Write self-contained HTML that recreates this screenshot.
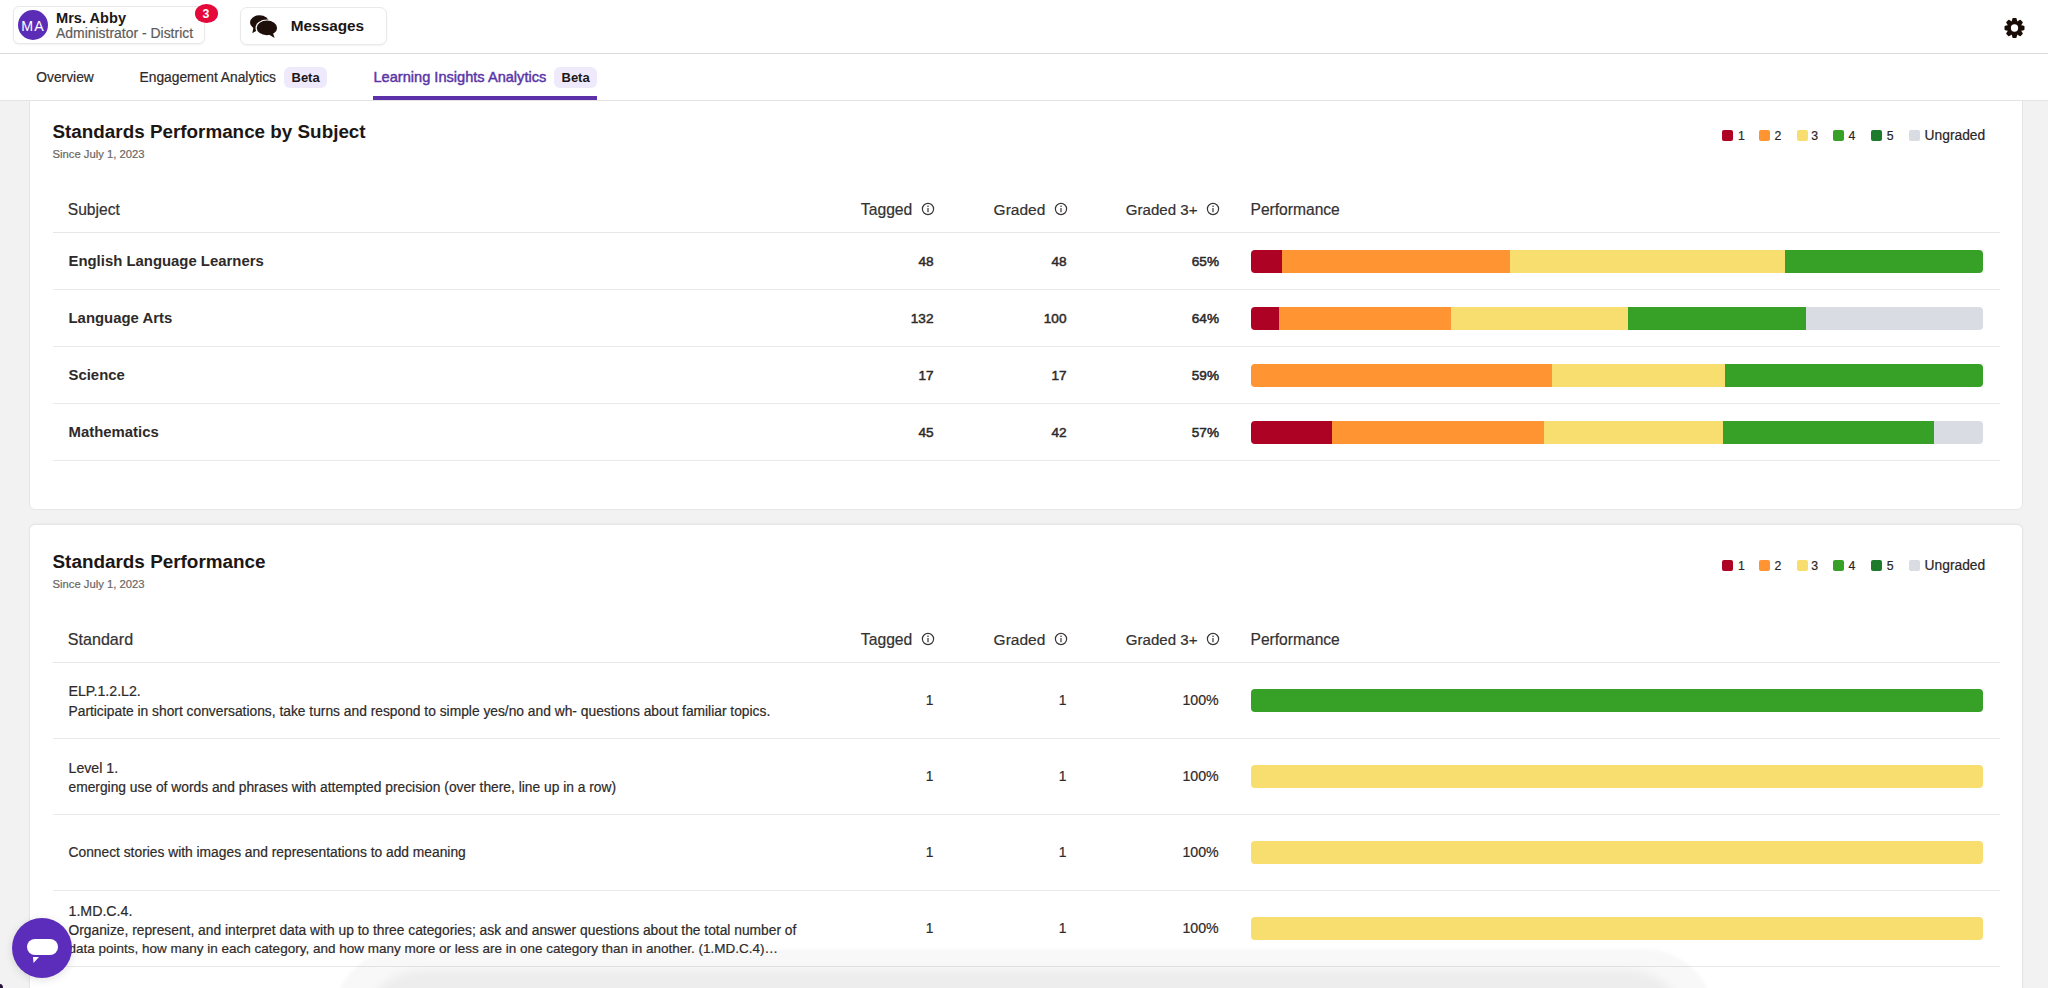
<!DOCTYPE html>
<html><head><meta charset="utf-8">
<style>
html,body{margin:0;padding:0;}
body{width:2048px;height:988px;overflow:hidden;position:relative;background:#F2F2F2;font-family:"Liberation Sans",sans-serif;}
.t{position:absolute;white-space:nowrap;-webkit-text-stroke:0.2px currentColor;}
.t[style*="font-weight:700"]{-webkit-text-stroke:0;}
.b{position:absolute;}
svg{position:absolute;}
</style></head><body>
<div class="b" style="left:29px;top:60px;width:1994px;height:450px;background:#FFFFFF;border:1px solid #E6E6E6;border-radius:6px;box-sizing:border-box;"></div>
<div class="b" style="left:29px;top:524px;width:1994px;height:600px;background:#FFFFFF;border:1px solid #E6E6E6;border-radius:6px;box-sizing:border-box;box-shadow:0 -1px 2px rgba(0,0,0,0.03);"></div>
<div class="b" style="left:0px;top:0px;width:2048px;height:53px;background:#FFFFFF;border-bottom:1px solid #DADADA;box-shadow:0 1px 1px rgba(0,0,0,0.04);"></div>
<div class="b" style="left:0px;top:54px;width:2048px;height:46px;background:#FFFFFF;border-bottom:1px solid #E4E4E4;"></div>
<div class="b" style="left:13px;top:6px;width:192px;height:38px;background:#FFFFFF;border:1px solid #E9E9E9;border-radius:6px;box-sizing:border-box;box-shadow:0 1px 2px rgba(0,0,0,0.05);"></div>
<div class="b" style="left:17.5px;top:10.2px;width:30.2px;height:30.2px;background:#5B2DB6;border-radius:50%;"></div>
<div class="t" style="left:21.3px;top:19.28px;font-size:14.2px;line-height:14.2px;color:#FFFFFF;letter-spacing:1.1px;-webkit-text-stroke:0;">MA</div>
<div class="t" style="left:56px;top:10.64px;font-size:14.6px;line-height:14.6px;font-weight:700;color:#1c1614;">Mrs. Abby</div>
<div class="t" style="left:56px;top:27.19px;font-size:13.95px;line-height:13.95px;color:#5f5b5a;">Administrator - District</div>
<div class="b" style="left:195px;top:4px;width:22.5px;height:18.5px;background:#E5083B;border-radius:50%;"></div>
<div class="t" style="left:202.6px;top:7.59px;font-size:12.3px;line-height:12.3px;font-weight:700;color:#FFFFFF;">3</div>
<div class="b" style="left:240px;top:7px;width:147px;height:38px;background:#FFFFFF;border:1px solid #E9E9E9;border-radius:7px;box-sizing:border-box;box-shadow:0 1px 2px rgba(0,0,0,0.05);"></div>
<svg style="left:246px;top:10px" width="36" height="32" viewBox="0 0 36 32">
<ellipse cx="13.6" cy="12.4" rx="9.6" ry="7.1" fill="#1f0f0a"/>
<path d="M7.5 17 L6.3 23.3 L13 19.2 Z" fill="#1f0f0a"/>
<ellipse cx="20.9" cy="17.9" rx="11.4" ry="8.5" fill="#FFFFFF"/>
<ellipse cx="20.9" cy="17.9" rx="10.2" ry="7.3" fill="#1f0f0a"/>
<path d="M22.5 24.2 L28.6 27.9 L26.8 22.5 Z" fill="#1f0f0a"/>
</svg>
<div class="t" style="left:290.8px;top:18.31px;font-size:15.35px;line-height:15.35px;font-weight:700;color:#1c1614;">Messages</div>
<svg style="left:2003px;top:16.7px" width="23" height="22" viewBox="0 0 23 22">
<path d="M9.48 5.14 L10.22 1.89 L12.78 1.89 L13.52 5.14 L14.22 5.43 L17.04 3.65 L18.85 5.46 L17.07 8.28 L17.36 8.98 L20.61 9.72 L20.61 12.28 L17.36 13.02 L17.07 13.72 L18.85 16.54 L17.04 18.35 L14.22 16.57 L13.52 16.86 L12.78 20.11 L10.22 20.11 L9.48 16.86 L8.78 16.57 L5.96 18.35 L4.15 16.54 L5.93 13.72 L5.64 13.02 L2.39 12.28 L2.39 9.72 L5.64 8.98 L5.93 8.28 L4.15 5.46 L5.96 3.65 L8.78 5.43 Z" fill="#1a0d08" stroke="#1a0d08" stroke-width="1.8" stroke-linejoin="round"/>
<circle cx="11.5" cy="11" r="3.65" fill="#FFFFFF"/>
</svg>
<div class="t" style="left:36.3px;top:70.82px;font-size:13.8px;line-height:13.8px;color:#2f2a29;-webkit-text-stroke:0.2px #2f2a29;">Overview</div>
<div class="t" style="left:139.5px;top:70.82px;font-size:13.8px;line-height:13.8px;color:#2f2a29;-webkit-text-stroke:0.2px #2f2a29;">Engagement Analytics</div>
<div class="b" style="left:284px;top:67px;width:43px;height:21px;background:#EFEAFB;border-radius:6px;"></div>
<div class="t" style="left:291.5px;top:71.30px;font-size:13.0px;line-height:13.0px;font-weight:700;color:#1c1614;">Beta</div>
<div class="t" style="left:373.5px;top:70.14px;font-size:14.6px;line-height:14.6px;color:#5A35A6;-webkit-text-stroke:0.45px #5A35A6;">Learning Insights Analytics</div>
<div class="b" style="left:554px;top:67px;width:43px;height:21px;background:#EFEAFB;border-radius:6px;"></div>
<div class="t" style="left:561.5px;top:71.30px;font-size:13.0px;line-height:13.0px;font-weight:700;color:#1c1614;">Beta</div>
<div class="b" style="left:373px;top:96px;width:224px;height:4px;background:#5B30A8;"></div>
<div class="t" style="left:52.5px;top:123.34px;font-size:18.85px;line-height:18.85px;font-weight:700;color:#1c1614;">Standards Performance by Subject</div>
<div class="t" style="left:52.5px;top:148.78px;font-size:11.25px;line-height:11.25px;color:#6a6665;">Since July 1, 2023</div>
<div class="b" style="left:1722px;top:130px;width:11px;height:11px;background:#AD0223;border-radius:2px;"></div>
<div class="t" style="left:1738px;top:130.09px;font-size:12.3px;line-height:12.3px;color:#2b2523;">1</div>
<div class="b" style="left:1758.5px;top:130px;width:11px;height:11px;background:#FF9433;border-radius:2px;"></div>
<div class="t" style="left:1774.4px;top:130.09px;font-size:12.3px;line-height:12.3px;color:#2b2523;">2</div>
<div class="b" style="left:1796.5px;top:130px;width:11px;height:11px;background:#F8DE6E;border-radius:2px;"></div>
<div class="t" style="left:1811.3px;top:130.09px;font-size:12.3px;line-height:12.3px;color:#2b2523;">3</div>
<div class="b" style="left:1833px;top:130px;width:11px;height:11px;background:#37A026;border-radius:2px;"></div>
<div class="t" style="left:1848.6px;top:130.09px;font-size:12.3px;line-height:12.3px;color:#2b2523;">4</div>
<div class="b" style="left:1871px;top:130px;width:11px;height:11px;background:#1E7B2B;border-radius:2px;"></div>
<div class="t" style="left:1886.8px;top:130.09px;font-size:12.3px;line-height:12.3px;color:#2b2523;">5</div>
<div class="b" style="left:1909px;top:130px;width:11px;height:11px;background:#D9DCE2;border-radius:2px;"></div>
<div class="t" style="left:1924.6px;top:128.82px;font-size:13.8px;line-height:13.8px;color:#2b2523;">Ungraded</div>
<div class="t" style="left:67.8px;top:201.59px;font-size:15.6px;line-height:15.6px;color:#333131;">Subject</div>
<div class="t" style="right:1135.7px;top:201.51px;font-size:15.7px;line-height:15.7px;color:#333131;">Tagged</div>
<svg style="left:920.8px;top:202.2px" width="14" height="14" viewBox="0 0 14 14">
<circle cx="7" cy="7" r="5.6" fill="none" stroke="#3a3636" stroke-width="1.2"/>
<rect x="6.4" y="6" width="1.2" height="4.2" fill="#3a3636"/>
<circle cx="7" cy="4.3" r="0.8" fill="#3a3636"/>
</svg>
<div class="t" style="right:1002.7px;top:201.68px;font-size:15.5px;line-height:15.5px;color:#333131;">Graded</div>
<svg style="left:1053.8px;top:202.2px" width="14" height="14" viewBox="0 0 14 14">
<circle cx="7" cy="7" r="5.6" fill="none" stroke="#3a3636" stroke-width="1.2"/>
<rect x="6.4" y="6" width="1.2" height="4.2" fill="#3a3636"/>
<circle cx="7" cy="4.3" r="0.8" fill="#3a3636"/>
</svg>
<div class="t" style="right:850.5px;top:202.02px;font-size:15.1px;line-height:15.1px;color:#333131;">Graded 3+</div>
<svg style="left:1206px;top:202.2px" width="14" height="14" viewBox="0 0 14 14">
<circle cx="7" cy="7" r="5.6" fill="none" stroke="#3a3636" stroke-width="1.2"/>
<rect x="6.4" y="6" width="1.2" height="4.2" fill="#3a3636"/>
<circle cx="7" cy="4.3" r="0.8" fill="#3a3636"/>
</svg>
<div class="t" style="left:1250.5px;top:201.59px;font-size:15.6px;line-height:15.6px;color:#333131;">Performance</div>
<div class="b" style="left:53px;top:232px;width:1947px;height:1px;background:#E6E6E6;"></div>
<div class="t" style="left:68.5px;top:254.39px;font-size:14.9px;line-height:14.9px;font-weight:700;color:#2e2a29;">English Language Learners</div>
<div class="t" style="right:1114.5px;top:254.79px;font-size:13.6px;line-height:13.6px;color:#2e2a29;-webkit-text-stroke:0.5px #2e2a29;">48</div>
<div class="t" style="right:981.5px;top:254.79px;font-size:13.6px;line-height:13.6px;color:#2e2a29;-webkit-text-stroke:0.5px #2e2a29;">48</div>
<div class="t" style="right:829px;top:254.79px;font-size:13.6px;line-height:13.6px;color:#2e2a29;-webkit-text-stroke:0.5px #2e2a29;">65%</div>
<div class="b" style="left:1251px;top:250px;width:732px;height:22.5px;border-radius:4px;overflow:hidden;display:flex;"><div style="flex:0 0 4.1667%;background:#AD0223;"></div><div style="flex:0 0 31.2500%;background:#FF9433;"></div><div style="flex:0 0 37.5000%;background:#F8DE6E;"></div><div style="flex:0 0 27.0833%;background:#37A026;"></div></div>
<div class="b" style="left:53px;top:289px;width:1947px;height:1px;background:#E9E9E9;"></div>
<div class="t" style="left:68.5px;top:311.39px;font-size:14.9px;line-height:14.9px;font-weight:700;color:#2e2a29;">Language Arts</div>
<div class="t" style="right:1114.5px;top:311.79px;font-size:13.6px;line-height:13.6px;color:#2e2a29;-webkit-text-stroke:0.5px #2e2a29;">132</div>
<div class="t" style="right:981.5px;top:311.79px;font-size:13.6px;line-height:13.6px;color:#2e2a29;-webkit-text-stroke:0.5px #2e2a29;">100</div>
<div class="t" style="right:829px;top:311.79px;font-size:13.6px;line-height:13.6px;color:#2e2a29;-webkit-text-stroke:0.5px #2e2a29;">64%</div>
<div class="b" style="left:1251px;top:307px;width:732px;height:22.5px;border-radius:4px;overflow:hidden;display:flex;"><div style="flex:0 0 3.7879%;background:#AD0223;"></div><div style="flex:0 0 23.4848%;background:#FF9433;"></div><div style="flex:0 0 24.2424%;background:#F8DE6E;"></div><div style="flex:0 0 24.2424%;background:#37A026;"></div><div style="flex:0 0 24.2424%;background:#D9DCE2;"></div></div>
<div class="b" style="left:53px;top:346px;width:1947px;height:1px;background:#E9E9E9;"></div>
<div class="t" style="left:68.5px;top:368.39px;font-size:14.9px;line-height:14.9px;font-weight:700;color:#2e2a29;">Science</div>
<div class="t" style="right:1114.5px;top:368.79px;font-size:13.6px;line-height:13.6px;color:#2e2a29;-webkit-text-stroke:0.5px #2e2a29;">17</div>
<div class="t" style="right:981.5px;top:368.79px;font-size:13.6px;line-height:13.6px;color:#2e2a29;-webkit-text-stroke:0.5px #2e2a29;">17</div>
<div class="t" style="right:829px;top:368.79px;font-size:13.6px;line-height:13.6px;color:#2e2a29;-webkit-text-stroke:0.5px #2e2a29;">59%</div>
<div class="b" style="left:1251px;top:364px;width:732px;height:22.5px;border-radius:4px;overflow:hidden;display:flex;"><div style="flex:0 0 41.1765%;background:#FF9433;"></div><div style="flex:0 0 23.5294%;background:#F8DE6E;"></div><div style="flex:0 0 35.2941%;background:#37A026;"></div></div>
<div class="b" style="left:53px;top:403px;width:1947px;height:1px;background:#E9E9E9;"></div>
<div class="t" style="left:68.5px;top:425.39px;font-size:14.9px;line-height:14.9px;font-weight:700;color:#2e2a29;">Mathematics</div>
<div class="t" style="right:1114.5px;top:425.79px;font-size:13.6px;line-height:13.6px;color:#2e2a29;-webkit-text-stroke:0.5px #2e2a29;">45</div>
<div class="t" style="right:981.5px;top:425.79px;font-size:13.6px;line-height:13.6px;color:#2e2a29;-webkit-text-stroke:0.5px #2e2a29;">42</div>
<div class="t" style="right:829px;top:425.79px;font-size:13.6px;line-height:13.6px;color:#2e2a29;-webkit-text-stroke:0.5px #2e2a29;">57%</div>
<div class="b" style="left:1251px;top:421px;width:732px;height:22.5px;border-radius:4px;overflow:hidden;display:flex;"><div style="flex:0 0 11.1111%;background:#AD0223;"></div><div style="flex:0 0 28.8889%;background:#FF9433;"></div><div style="flex:0 0 24.4444%;background:#F8DE6E;"></div><div style="flex:0 0 28.8889%;background:#37A026;"></div><div style="flex:0 0 6.6667%;background:#D9DCE2;"></div></div>
<div class="b" style="left:53px;top:460px;width:1947px;height:1px;background:#E9E9E9;"></div>
<div class="t" style="left:52.5px;top:553.30px;font-size:18.9px;line-height:18.9px;font-weight:700;color:#1c1614;">Standards Performance</div>
<div class="t" style="left:52.5px;top:578.78px;font-size:11.25px;line-height:11.25px;color:#6a6665;">Since July 1, 2023</div>
<div class="b" style="left:1722px;top:560px;width:11px;height:11px;background:#AD0223;border-radius:2px;"></div>
<div class="t" style="left:1738px;top:560.09px;font-size:12.3px;line-height:12.3px;color:#2b2523;">1</div>
<div class="b" style="left:1758.5px;top:560px;width:11px;height:11px;background:#FF9433;border-radius:2px;"></div>
<div class="t" style="left:1774.4px;top:560.09px;font-size:12.3px;line-height:12.3px;color:#2b2523;">2</div>
<div class="b" style="left:1796.5px;top:560px;width:11px;height:11px;background:#F8DE6E;border-radius:2px;"></div>
<div class="t" style="left:1811.3px;top:560.09px;font-size:12.3px;line-height:12.3px;color:#2b2523;">3</div>
<div class="b" style="left:1833px;top:560px;width:11px;height:11px;background:#37A026;border-radius:2px;"></div>
<div class="t" style="left:1848.6px;top:560.09px;font-size:12.3px;line-height:12.3px;color:#2b2523;">4</div>
<div class="b" style="left:1871px;top:560px;width:11px;height:11px;background:#1E7B2B;border-radius:2px;"></div>
<div class="t" style="left:1886.8px;top:560.09px;font-size:12.3px;line-height:12.3px;color:#2b2523;">5</div>
<div class="b" style="left:1909px;top:560px;width:11px;height:11px;background:#D9DCE2;border-radius:2px;"></div>
<div class="t" style="left:1924.6px;top:558.82px;font-size:13.8px;line-height:13.8px;color:#2b2523;">Ungraded</div>
<div class="t" style="left:67.8px;top:631.17px;font-size:16.1px;line-height:16.1px;color:#333131;">Standard</div>
<div class="t" style="right:1135.7px;top:631.51px;font-size:15.7px;line-height:15.7px;color:#333131;">Tagged</div>
<svg style="left:920.8px;top:632.2px" width="14" height="14" viewBox="0 0 14 14">
<circle cx="7" cy="7" r="5.6" fill="none" stroke="#3a3636" stroke-width="1.2"/>
<rect x="6.4" y="6" width="1.2" height="4.2" fill="#3a3636"/>
<circle cx="7" cy="4.3" r="0.8" fill="#3a3636"/>
</svg>
<div class="t" style="right:1002.7px;top:631.68px;font-size:15.5px;line-height:15.5px;color:#333131;">Graded</div>
<svg style="left:1053.8px;top:632.2px" width="14" height="14" viewBox="0 0 14 14">
<circle cx="7" cy="7" r="5.6" fill="none" stroke="#3a3636" stroke-width="1.2"/>
<rect x="6.4" y="6" width="1.2" height="4.2" fill="#3a3636"/>
<circle cx="7" cy="4.3" r="0.8" fill="#3a3636"/>
</svg>
<div class="t" style="right:850.5px;top:632.02px;font-size:15.1px;line-height:15.1px;color:#333131;">Graded 3+</div>
<svg style="left:1206px;top:632.2px" width="14" height="14" viewBox="0 0 14 14">
<circle cx="7" cy="7" r="5.6" fill="none" stroke="#3a3636" stroke-width="1.2"/>
<rect x="6.4" y="6" width="1.2" height="4.2" fill="#3a3636"/>
<circle cx="7" cy="4.3" r="0.8" fill="#3a3636"/>
</svg>
<div class="t" style="left:1250.5px;top:631.59px;font-size:15.6px;line-height:15.6px;color:#333131;">Performance</div>
<div class="b" style="left:53px;top:662px;width:1947px;height:1px;background:#E6E6E6;"></div>
<div class="t" style="left:68.5px;top:684.08px;font-size:14.2px;line-height:14.2px;color:#2e2a29;">ELP.1.2.L2.</div>
<div class="t" style="left:68.5px;top:704.52px;font-size:13.8px;line-height:13.8px;color:#2e2a29;">Participate in short conversations, take turns and respond to simple yes/no and wh- questions about familiar topics.</div>
<div class="t" style="right:1114.5px;top:693.52px;font-size:13.8px;line-height:13.8px;color:#2e2a29;">1</div>
<div class="t" style="right:981.5px;top:693.52px;font-size:13.8px;line-height:13.8px;color:#2e2a29;">1</div>
<div class="t" style="right:829.3px;top:693.48px;font-size:14.2px;line-height:14.2px;color:#2e2a29;">100%</div>
<div class="b" style="left:1251px;top:689px;width:732px;height:23px;background:#37A026;border-radius:4px;"></div>
<div class="b" style="left:53px;top:738px;width:1947px;height:1px;background:#E9E9E9;"></div>
<div class="t" style="left:68.5px;top:760.68px;font-size:14.2px;line-height:14.2px;color:#2e2a29;">Level 1.</div>
<div class="t" style="left:68.5px;top:780.62px;font-size:13.8px;line-height:13.8px;color:#2e2a29;">emerging use of words and phrases with attempted precision (over there, line up in a row)</div>
<div class="t" style="right:1114.5px;top:769.52px;font-size:13.8px;line-height:13.8px;color:#2e2a29;">1</div>
<div class="t" style="right:981.5px;top:769.52px;font-size:13.8px;line-height:13.8px;color:#2e2a29;">1</div>
<div class="t" style="right:829.3px;top:769.48px;font-size:14.2px;line-height:14.2px;color:#2e2a29;">100%</div>
<div class="b" style="left:1251px;top:765px;width:732px;height:23px;background:#F8DE6E;border-radius:4px;"></div>
<div class="b" style="left:53px;top:814px;width:1947px;height:1px;background:#E9E9E9;"></div>
<div class="t" style="left:68.5px;top:845.82px;font-size:13.8px;line-height:13.8px;color:#2e2a29;">Connect stories with images and representations to add meaning</div>
<div class="t" style="right:1114.5px;top:845.52px;font-size:13.8px;line-height:13.8px;color:#2e2a29;">1</div>
<div class="t" style="right:981.5px;top:845.52px;font-size:13.8px;line-height:13.8px;color:#2e2a29;">1</div>
<div class="t" style="right:829.3px;top:845.48px;font-size:14.2px;line-height:14.2px;color:#2e2a29;">100%</div>
<div class="b" style="left:1251px;top:841px;width:732px;height:23px;background:#F8DE6E;border-radius:4px;"></div>
<div class="b" style="left:53px;top:890px;width:1947px;height:1px;background:#E9E9E9;"></div>
<div class="t" style="left:68.5px;top:903.68px;font-size:14.2px;line-height:14.2px;color:#2e2a29;">1.MD.C.4.</div>
<div class="t" style="left:68.5px;top:923.82px;font-size:13.8px;line-height:13.8px;color:#2e2a29;">Organize, represent, and interpret data with up to three categories; ask and answer questions about the total number of</div>
<div class="t" style="left:68.5px;top:941.67px;font-size:13.5px;line-height:13.5px;color:#2e2a29;">data points, how many in each category, and how many more or less are in one category than in another. (1.MD.C.4)&#8230;</div>
<div class="t" style="right:1114.5px;top:921.52px;font-size:13.8px;line-height:13.8px;color:#2e2a29;">1</div>
<div class="t" style="right:981.5px;top:921.52px;font-size:13.8px;line-height:13.8px;color:#2e2a29;">1</div>
<div class="t" style="right:829.3px;top:921.48px;font-size:14.2px;line-height:14.2px;color:#2e2a29;">100%</div>
<div class="b" style="left:1251px;top:917px;width:732px;height:23px;background:#F8DE6E;border-radius:4px;"></div>
<div class="b" style="left:53px;top:966px;width:1947px;height:1px;background:#E9E9E9;"></div>
<div class="b" style="left:333px;top:949px;width:1381px;height:140px;background:rgba(90,90,120,0.045);border-radius:70px;filter:blur(1.5px);"></div>
<div class="b" style="left:362px;top:970px;width:1325px;height:120px;background:rgba(0,0,0,0.045);border-radius:60px;filter:blur(4px);"></div>
<div class="b" style="left:12px;top:918px;width:60px;height:60px;background:#5B2DBA;border-radius:50%;box-shadow:0 2px 8px rgba(0,0,0,0.12);"></div>
<div class="b" style="left:27px;top:938.5px;width:31px;height:16px;background:#FFFFFF;border-radius:8px;"></div>
<svg style="left:32px;top:956px" width="8" height="8" viewBox="0 0 8 8"><path d="M1 1 L7 1 L1.5 7 Z" fill="#FFFFFF"/></svg>
<div class="b" style="left:-3px;top:984px;width:6px;height:8px;background:#24143a;border-radius:50%;"></div>
</body></html>
